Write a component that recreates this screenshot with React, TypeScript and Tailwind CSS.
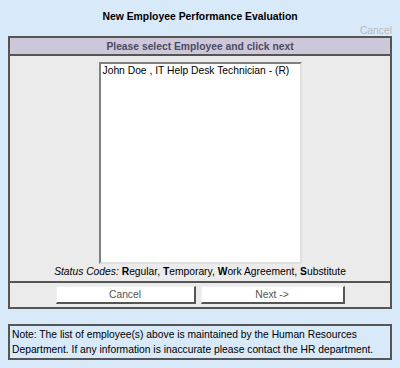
import React from "react";

export default function App() {
  return (
    <div
      className="w-[400px] h-[368px] bg-[#d8e9f9] overflow-hidden text-[10.3px] text-black"
      style={{ fontFamily: '"Liberation Sans", Arial, sans-serif' }}
    >
      <div className="h-[26px] pt-[10px] text-center font-bold text-[10.4px] leading-[13px]">
        New Employee Performance Evaluation
      </div>
      <div className="h-[10px] pr-[8px] text-right text-[#b8b8b8] text-[10.3px] leading-[10px]">
        Cancel
      </div>
      <div className="mx-[8px] border-2 border-[#555555] bg-[#ebebeb]">
        <div className="h-[18px] bg-[#ccc7d9] border-b-2 border-[#555555] text-center font-bold text-[#4d4b63] leading-[18px]">
          Please select Employee and click next
        </div>
        <div className="flex flex-col items-center pt-[6px]">
          <div className="w-[203px] h-[202px] bg-white border-2 border-t-[#808080] border-l-[#808080] border-r-[#e0e0e0] border-b-[#e0e0e0] px-[2px] leading-[13px] whitespace-nowrap">
            John Doe , IT Help Desk Technician - (R)
          </div>
          <div className="h-[17px] leading-[16px] whitespace-nowrap">
            <span className="italic">Status Codes:</span> <b>R</b>egular, <b>T</b>emporary, <b>W</b>ork Agreement, <b>S</b>ubstitute
          </div>
        </div>
        <div className="border-t-2 border-[#555555] flex justify-center gap-[5px] pt-[3px] pb-[3px]">
          <button className="w-[140px] h-[18px] bg-white border border-[#f0f0f0] border-r-2 border-b-2 border-r-[#555555] border-b-[#555555] text-[#555555] leading-[14px]">
            Cancel
          </button>
          <button className="w-[144px] h-[18px] bg-white border border-[#f0f0f0] border-r-2 border-b-2 border-r-[#555555] border-b-[#555555] text-[#555555] leading-[14px]">
            Next -&gt;
          </button>
        </div>
      </div>
      <div className="mx-[8px] mt-[15px] border-2 border-[#555555] px-[2px] py-[1px] leading-[15px]">
        Note: The list of employee(s) above is maintained by the Human Resources
        <br />
        Department. If any information is inaccurate please contact the HR department.
      </div>
    </div>
  );
}
